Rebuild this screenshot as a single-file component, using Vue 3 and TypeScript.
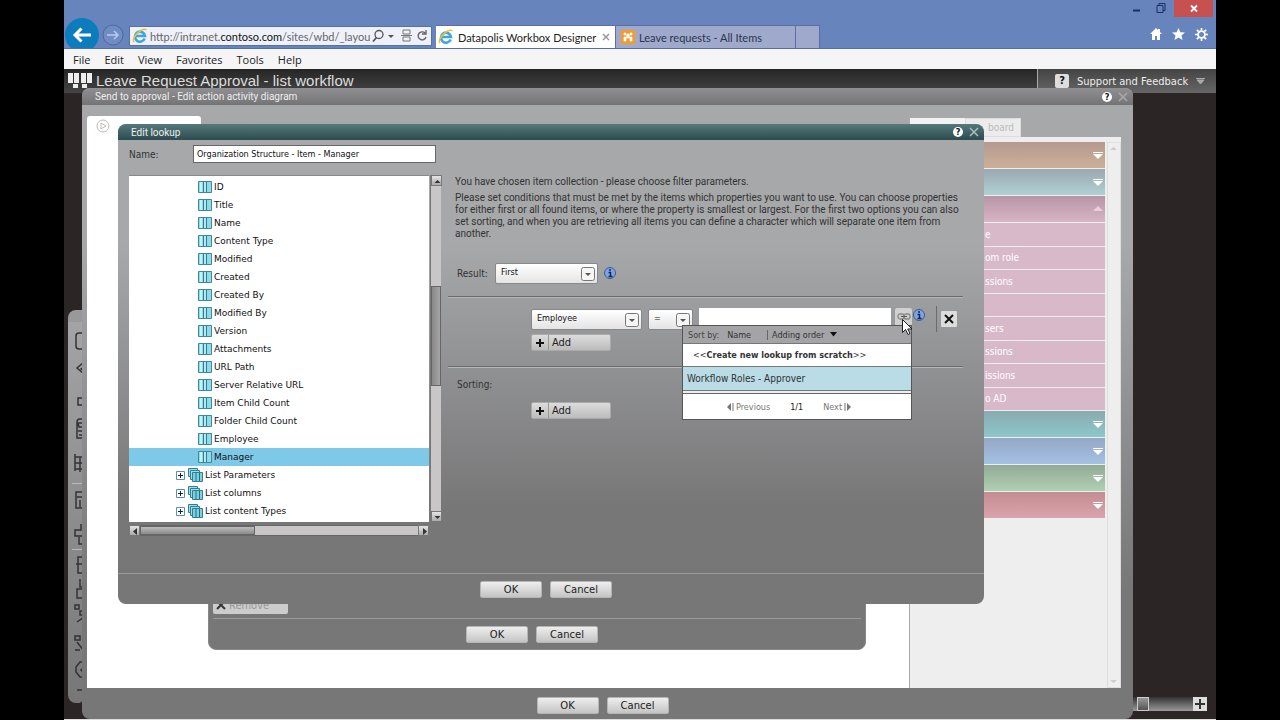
<script setup lang="ts">
import { ref } from 'vue'

interface Node { label: string; group?: boolean }
const columns: string[] = ['ID', 'Title', 'Name', 'Content Type', 'Modified', 'Created', 'Created By', 'Modified By', 'Version', 'Attachments', 'URL Path', 'Server Relative URL', 'Item Child Count', 'Folder Child Count', 'Employee', 'Manager']
const groups: string[] = ['List Parameters', 'List columns', 'List content Types']
const nodes: Node[] = [...columns.map((label) => ({ label })), ...groups.map((label) => ({ label, group: true }))]
const selected = ref('Manager')
const lookupName = ref('Organization Structure - Item - Manager')
const filterValue = ref('')
const address = 'http://intranet.'
const menus: string[] = ['File', 'Edit', 'View', 'Favorites', 'Tools', 'Help']
const pinkItems: string[] = ['e', 'om role', 'ssions', '', 'sers', 'ssions', 'issions', 'o AD']
</script>

<template>
  <div class="screen">
    <div class="desk">
      <header class="chrome">
        <div class="wincontrols">
          <button aria-label="Minimize"><svg width="24" height="17"><path d="M8 10.5h7" stroke="#1b2f66" stroke-width="2" /></svg></button>
          <button aria-label="Restore"><svg width="24" height="17"><path d="M8 5.500h6v7h-6zM10 5V3.500h6v7h-2" fill="none" stroke="#1b2f66" /></svg></button>
          <button class="close" aria-label="Close"><svg width="39" height="17"><path d="M17 5.500l6 6m0-6l-6 6" stroke="#fff" stroke-width="1.800" /></svg></button>
        </div>
        <div class="navrow">
          <button class="back" aria-label="Back"><svg width="34" height="34"><circle cx="17" cy="17" r="17" fill="#0c7cbc" /><path d="M26 17H10M16.500 10.500L10 17l6.500 6.500" fill="none" stroke="#fff" stroke-width="3" /></svg></button>
          <button class="forward" aria-label="Forward"><svg width="24" height="24"><circle cx="12" cy="12" r="10" fill="#708cc3" stroke="#4b68ab" /><path d="M6 12h11M13 8l4 4l-4 4" fill="none" stroke="#b9cbea" stroke-width="1.500" /></svg></button>
          <div class="address">
            <svg class="ie" width="16" height="16" viewBox="0 0 16 16"><path d="M12.700 10.500A5 5 0 1 1 13 8H4" fill="none" stroke="#40a5df" stroke-width="2.600" /><path d="M2 14C-1 10 10-1 14.500 2" fill="none" stroke="#e8c52d" stroke-width="1.500" /></svg>
            <span class="url">{{ address }}<b>contoso.com</b>/sites/wbd/_layou</span>
            <svg width="58" height="18"><circle cx="9" cy="7.500" r="4" fill="none" stroke="#555" stroke-width="1.300" /><path d="M6.500 10.500L3 14.500" stroke="#555" stroke-width="1.800" /><path d="M18 8h6l-3 3z" fill="#555" /><path d="M33 3h7v4h-7zM33 14v-4h7v4zM31 8.500h11" fill="none" stroke="#777" /><path d="M55 6A4 4 0 1 0 56 10M56 3v4h-4" fill="none" stroke="#666" stroke-width="1.400" /></svg>
          </div>
          <div class="tabs">
            <a class="tab active" href="#"><svg width="16" height="16" viewBox="0 0 16 16"><path d="M12.700 10.500A5 5 0 1 1 13 8H4" fill="none" stroke="#40a5df" stroke-width="2.600" /><path d="M2 14C-1 10 10-1 14.500 2" fill="none" stroke="#e8c52d" stroke-width="1.500" /></svg><span>Datapolis Workbox Designer</span><svg class="tabx" width="8" height="8"><path d="M1 1l6 6m0-6L1 7" stroke="#999" stroke-width="1.500" /></svg></a>
            <a class="tab" href="#"><svg width="14" height="14"><rect width="14" height="14" fill="#f59b2a" /><path d="M3 3h2v2H3zM9 3h2v2H9zM6 4h2v3H6zM3 7h8v1H3zM3 8h2v3H3zM9 8h2v3H9zM5 5l4 3M9 5L5 8" fill="#fff" stroke="#fff" stroke-width=".6" /></svg><span>Leave requests - All Items</span></a>
            <button class="newtab" aria-label="New tab"></button>
          </div>
          <div class="tools">
            <svg width="12" height="12"><path d="M6 0L0 6h2v6h3V8h2v4h3V6h2L10 4V1H8v1z" fill="#fff" /></svg>
            <svg width="13" height="12" viewBox="0 0 14 13"><path d="M7 0l2 4.600 5 .4-3.800 3.200 1.200 4.800L7 10.400 2.600 13l1.200-4.800L0 5l5-.4z" fill="#fff" /></svg>
            <svg width="13" height="13" viewBox="0 0 14 14"><circle cx="7" cy="7" r="3.700" fill="none" stroke="#fff" stroke-width="2" /><path d="M7 0v3M7 11v3M0 7h3M11 7h3M2 2l2 2M10 10l2 2M2 12l2-2M10 4l2-2" stroke="#fff" stroke-width="1.800" /></svg>
          </div>
        </div>
      </header>
      <nav class="menubar"><a v-for="m in menus" :key="m" href="#">{{ m }}</a></nav>

      <main class="workspace">
        <div class="appbar">
          <svg width="24" height="16"><path d="M0 0h5v10H0zM6 0h5v10H6zM13 0h5v10h-5zM19 0h5v10h-5zM5 11h5v4H5zM14 11h5v4h-5z" fill="#eee" /></svg>
          <h1>Leave Request Approval - list workflow</h1>
          <a class="support" href="#"><span class="qbox">?</span><span>Support and Feedback</span><svg width="9" height="6"><path d="M0 .5h9M1 2h7L4.500 6z" fill="#aaa" stroke="#aaa" /></svg></a>
        </div>

        <aside class="palette">
          <svg width="16" height="374" fill="none" stroke="#333" stroke-width="1.500">
            <path d="M16 3h-5q-3 0-3 3v10q0 3 3 3h5M16 32l-7 6l7 6M16 37l-3 2l3 2M16 67v8h-6v-7h6M15 64v11M16 89h-4q-3 0-3 3v16h7M10 93h6v4h-5zM10 101h6v4h-5M7 127h9M7 133h9M7 139h9M7 124v17M12 127v15M16 162H8v16h8M9 167h7M12 170v7M13 194v6H7v6h9M11 207v7h5M16 229v-2h-6v16h6M8 234h8M16 257h-4v-8M16 268h-7v-9h7M16 278v13M7 275h4v4H7zM12 281h4v4h-4zM16 287l-7 5M7 306h5v4H7zM9 312l7 9M7 320h5M16 332h-4l-4 5v5l4 5h4M16 337l-3 3l3 3M14 360h-5M16 371l-8 5" />
            <path d="M4 153.500h12M4 219.500h12" stroke="#bbb" stroke-width="1" />
          </svg>
        </aside>
        <div class="zoombar"><span class="track"><span class="knob"></span></span><button aria-label="Zoom in"><svg width="14" height="14"><path d="M7 2v10M2 7h10" stroke="#333" stroke-width="2" /></svg></button></div>

        <!-- activity diagram window -->
        <section class="win outer">
          <div class="wintitle"><h2>Send to approval - Edit action activity diagram</h2><button class="help" aria-label="Help">?</button><button class="x" aria-label="Close"><svg width="10" height="10"><path d="M1 1l8 8m0-8L1 9" stroke="#aaa" stroke-width="1.500" /></svg></button></div>
          <div class="outerbody">
            <div class="canvascol">
              <div class="canvastab"><svg width="14" height="14"><circle cx="7" cy="7" r="6" fill="none" stroke="#bbb" /><path d="M5 4l5 3l-5 3z" fill="none" stroke="#bbb" /></svg></div>
              <div class="canvas"></div>
            </div>
            <div class="sidecol">
              <div class="sidetabs"><span class="first"></span><span class="second">board</span></div>
              <div class="sidebox">
                <div class="accordion">
                  <div class="acc tan"><i class="down"></i></div>
                  <div class="acc sky"><i class="down"></i></div>
                  <div class="acc pink"><i class="up"></i></div>
                  <ul><li v-for="(p, i) in pinkItems" :key="i">{{ p }}</li></ul>
                  <div class="acc teal"><i class="down"></i></div>
                  <div class="acc blue"><i class="down"></i></div>
                  <div class="acc green"><i class="down"></i></div>
                  <div class="acc red"><i class="down"></i></div>
                </div>
                <div class="fadebar"><svg width="11" height="11"><path d="M2 7h7L5.500 4z" fill="#ccc" /></svg><svg width="11" height="11"><path d="M2 4h7L5.500 7z" fill="#ccc" /></svg></div>
              </div>
            </div>
          </div>
          <div class="actions"><button class="btn">OK</button><button class="btn">Cancel</button></div>
        </section>

        <!-- window behind the lookup editor -->
        <section class="win middle">
          <div class="removeline"><button class="remove"><svg width="16" height="12"><path d="M4 2l8 8m0-8l-8 8" stroke="#333" stroke-width="2" /></svg><span>Remove</span></button></div>
          <div class="actions"><button class="btn">OK</button><button class="btn">Cancel</button></div>
        </section>

        <section class="win lookup">
          <div class="wintitle"><h2>Edit lookup</h2><button class="help" aria-label="Help">?</button><button class="x" aria-label="Close"><svg width="10" height="10"><path d="M1 1l8 8m0-8L1 9" stroke="#a9bfc0" stroke-width="1.500" /></svg></button></div>
          <div class="lookupbody">
            <div class="left">
              <div class="namerow"><label for="lname">Name:</label><input id="lname" v-model="lookupName" type="text" /></div>
              <div class="treewrap">
                <ul class="tree">
                  <li v-for="n in nodes" :key="n.label" :class="{ sel: n.label === selected, group: n.group }" @click="selected = n.label">
                    <svg v-if="!n.group" width="14" height="12"><path d="M.5.500h13v11H.5z" fill="#8fdbe8" stroke="#3d8a99" /><path d="M2 1h2v10H2z" fill="#c5f2f7" /><path d="M5.500 1v10M8.500 1v10" stroke="#2f7f92" /><path d="M6 1h2v10H6z" fill="#b5e8f2" /></svg>
                    <template v-else>
                      <svg width="9" height="9"><path d="M.5.500h8v8h-8z" fill="#fff" stroke="#5a8fae" /><path d="M2 4.500h5M4.500 2v5" stroke="#123" /></svg>
                      <svg class="stack" width="15" height="14"><path d="M.5.500h9v8h-9z" fill="#9fdce8" stroke="#2f8093" /><path d="M2.500 2.500h9v9h-9z" fill="#9fdce8" stroke="#2f8093" /><path d="M4.500 4.500h10v9h-10z" fill="#7fd0df" stroke="#2f8093" /><path d="M8 5v8M11.500 5v8" stroke="#226d80" /></svg>
                    </template>
                    <span>{{ n.label }}</span>
                  </li>
                </ul>
                <div class="vbar"><svg class="cap" width="11" height="11"><path d="M2.500 7h6L5.500 4z" fill="#333" /></svg><span class="vthumb"></span><svg class="cap" width="11" height="11"><path d="M2.500 4h6L5.500 7z" fill="#333" /></svg></div>
                <div class="hbar"><svg class="cap" width="11" height="11"><path d="M7 2v7L3 5.500z" fill="#333" /></svg><span class="hthumb"></span><svg class="cap" width="11" height="11"><path d="M4 2v7l4-3.500z" fill="#333" /></svg></div>
              </div>
            </div>
            <div class="right">
              <div class="intro">
                <p>You have chosen item collection - please choose filter parameters.</p>
                <p>Please set conditions that must be met by the items which properties you want to use. You can choose properties<br />for either first or all found items, or where the property is smallest or largest. For the first two options you can also<br />set sorting, and when you are retrieving all items you can define a character which will separate one item from<br />another.</p>
              </div>
              <div class="resultrow">
                <label for="result">Result:</label>
                <span class="sel-box wide"><select id="result"><option>First</option></select><svg width="14" height="14"><rect x=".5" y=".5" width="13" height="13" rx="2" fill="#f5f5f5" stroke="#777" /><path d="M4 6h6l-3 3z" fill="#555" /></svg></span>
                <svg class="info" width="12" height="12"><circle cx="6" cy="6" r="5.500" fill="#7fa5dd" stroke="#3d5c94" /><path d="M6 2v2M4.500 5.500H6.500V9.500M4.500 9.500h4" fill="none" stroke="#10275c" stroke-width="1.500" /></svg>
              </div>
              <hr />
              <div class="filterrow">
                <span class="sel-box field"><select aria-label="Field"><option>Employee</option></select><svg width="14" height="14"><rect x=".5" y=".5" width="13" height="13" rx="2" fill="#f5f5f5" stroke="#777" /><path d="M4 6h6l-3 3z" fill="#555" /></svg></span>
                <span class="sel-box oper"><select aria-label="Operator"><option>=</option></select><svg width="14" height="14"><rect x=".5" y=".5" width="13" height="13" rx="2" fill="#f5f5f5" stroke="#777" /><path d="M4 6h6l-3 3z" fill="#555" /></svg></span>
                <div class="valuebox">
                  <input v-model="filterValue" type="text" aria-label="Value" />
                  <button class="link" aria-label="Lookup"><svg width="14" height="10"><rect x="1" y="2" width="6" height="5" rx="2" fill="none" stroke="#888" stroke-width="1.300" /><rect x="7" y="2" width="6" height="5" rx="2" fill="none" stroke="#888" stroke-width="1.300" /><path d="M4 4.500h6" stroke="#555" /></svg></button>
                  <div class="popup">
                    <div class="sort"><span class="by">Sort by:</span><button>Name</button><button class="order">Adding order <svg width="7" height="5"><path d="M0 0h7L3.500 4.500z" fill="#111" /></svg></button></div>
                    <button class="create">&lt;&lt;<b>Create new lookup from scratch</b>&gt;&gt;</button>
                    <button class="choice">Workflow Roles - Approver</button>
                    <div class="pager"><button><svg width="7" height="8"><path d="M4 0v8L0 4z" fill="#777" /><path d="M6 0v8" stroke="#777" /></svg> Previous</button><span>1/1</span><button>Next <svg width="7" height="8"><path d="M3 0v8l4-4z" fill="#777" /><path d="M1 0v8" stroke="#777" /></svg></button></div>
                  </div>
                  <svg class="pointer" width="11" height="17"><path d="M.5.500v13l3-3 2.500 5 2-1-2.300-4.500H10z" fill="#fff" stroke="#222" /></svg>
                </div>
                <svg class="info" width="12" height="12"><circle cx="6" cy="6" r="5.500" fill="#7fa5dd" stroke="#3d5c94" /><path d="M6 2v2M4.500 5.500H6.500V9.500M4.500 9.500h4" fill="none" stroke="#10275c" stroke-width="1.500" /></svg>
                <span class="vline"></span>
                <button class="del" aria-label="Delete"><svg width="10" height="10"><path d="M1 1l8 8m0-8L1 9" stroke="#111" stroke-width="2" /></svg></button>
              </div>
              <div class="addrow"><button class="add"><span class="plus"><svg width="8" height="8"><path d="M4 0v8M0 4h8" stroke="#111" stroke-width="2" /></svg></span>Add</button></div>
              <hr />
              <p class="sorting">Sorting:</p>
              <div class="addrow"><button class="add"><span class="plus"><svg width="8" height="8"><path d="M4 0v8M0 4h8" stroke="#111" stroke-width="2" /></svg></span>Add</button></div>
            </div>
          </div>
          <div class="actions"><button class="btn">OK</button><button class="btn">Cancel</button></div>
        </section>
      </main>
    </div>
  </div>
</template>

<style>
body { margin: 0; background: #000; }
</style>

<style scoped>
* { box-sizing: border-box; }
h1, h2, p, ul { margin: 0; padding: 0; font-weight: normal; }
ul { list-style: none; }
button { border: 0; padding: 0; background: none; font: inherit; color: inherit; display: flex; align-items: center; }
a { color: inherit; text-decoration: none; }
svg { display: block; flex: none; }
.screen { background: #000; padding: 0 5%; font-family: "DejaVu Sans Condensed", "DejaVu Sans", sans-serif; font-size: 10px; color: #222; }
.desk { height: 100vh; min-height: 720px; display: flex; flex-direction: column; overflow: hidden; border-bottom: 1px solid #ddd; }
.chrome { height: 49px; background: #6785bc; border-bottom: 1px solid #55709f; overflow: hidden; flex: none; font-family: Lato, "Noto Sans", sans-serif; }
.wincontrols { display: flex; justify-content: flex-end; padding-right: 3px; height: 17px; }
.close { background: #c75050; margin-left: 1px; }
.navrow { display: flex; height: 31px; }
.back { align-self: flex-start; margin: 1px 2px 0 1px; height: 34px; }
.forward { height: 24px; margin: 6px 4px 0 0; }
.address { flex: none; width: 303px; height: 20px; margin-top: 9px; background: #eef1fa; border: 1px solid #5670a8; display: flex; align-items: center; padding: 0 3px 0 2px; font-size: 11px; color: #666; }
.url { flex: 1; min-width: 0; white-space: nowrap; margin-left: 2px; }
.url b { font-weight: 400; color: #111; }
.tabs { display: flex; margin: 8px 0 0 4px; height: 23px; font-size: 11px; }
.tab { width: 180px; background: #9ea9cc; border: 1px solid #5a70a4; border-left: 0; border-bottom: 0; display: flex; align-items: center; gap: 4px; padding-left: 5px; color: #2c3450; white-space: nowrap; }
.tab.active { background: #fff; color: #222; padding-left: 2px; }
.tabx { margin: 0 5px 0 auto; }
.newtab { width: 24px; background: #9ea9cc; border: 1px solid #5a70a4; border-left: 0; border-bottom: 0; }
.tools { margin: 11px 8px 0 auto; display: flex; gap: 10px; }
.menubar { flex: none; height: 20px; background: #f5f5f6; display: flex; align-items: center; padding-left: 9px; gap: 14px; font: 11px "Open Sans", "Noto Sans", sans-serif; color: #222; }
.workspace { flex: 1; position: relative; background: #2b2526; min-height: 0; }
.appbar { height: 24px; background: linear-gradient(#262626, #444); display: flex; align-items: center; padding-left: 4px; gap: 4px; color: #ddd; }
.appbar h1 { font: 15px "Liberation Sans", Arial, sans-serif; padding-bottom: 2px; }
.support { margin-left: auto; width: 179px; height: 24px; background: linear-gradient(#444, #666); border-left: 1px solid #aaa; display: flex; align-items: center; gap: 8px; padding-left: 17px; font-size: 11px; color: #eee; white-space: nowrap; }
.qbox { width: 14px; height: 14px; border-radius: 2px; background: #ddd; color: #111; font-weight: bold; line-height: 14px; text-align: center; }
.palette { position: absolute; left: 4px; top: 241px; bottom: 16px; width: 30px; border-radius: 8px; background: linear-gradient(#999 12px, #a4a4a6 12px, #777); padding: 20px 0 0; overflow: hidden; }
.zoombar { position: absolute; right: 9px; bottom: 8px; width: 76px; height: 14px; display: flex; }
.zoombar .track { flex: 1; background: linear-gradient(#333, #999); padding-left: 6px; }
.knob { display: block; width: 12px; height: 14px; background: linear-gradient(#999, #555); border: 1px solid #ccc; }
.zoombar button { background: #ddd; }
.win { position: absolute; display: flex; flex-direction: column; border-radius: 8px; background: linear-gradient(#a7a8aa 25%, #777778 80%); }
.wintitle { flex: none; height: 17px; display: flex; align-items: center; padding: 0 5px 0 13px; border-radius: 8px 8px 0 0; color: #eee; background: linear-gradient(#909092, #747476); }
.wintitle h2 { flex: 1; font: 10px Roboto, "Noto Sans", sans-serif; }
.help { width: 10px; height: 10px; border-radius: 5px; background: #fff; color: #111; font-size: 9px; font-weight: bold; justify-content: center; line-height: 10px; margin-right: 6px; }
.outer { left: 18px; right: 83px; top: 19px; bottom: 0; }
.outerbody { flex: 1; display: flex; padding: 11px 12px 0 5px; min-height: 0; }
.outer .actions { height: 31px; padding-top: 3px; }
.canvascol { flex: 1; display: flex; flex-direction: column; border-right: 1px solid #aaa; }
.canvastab { width: 114px; height: 20px; padding: 3px 9px; background: #fff; border-radius: 3px 3px 0 0; }
.canvas { flex: 1; background: #fff; }
.sidecol { width: 211px; display: flex; flex-direction: column; }
.sidetabs { display: flex; height: 21px; padding-top: 2px; color: #bbb; }
.first { width: 55px; background: #f2f2f2; }
.second { width: 56px; background: #ececec; border: 1px solid #ddd; padding: 3px 0 0 22px; }
.sidebox { flex: 1; background: #eee; display: flex; gap: 2px; padding-top: 5px; }
.accordion { flex: 1; color: #fff; }
.acc { height: 26px; margin-bottom: 1px; padding: 10px 2px; display: flex; justify-content: flex-end; }
.down { border-top: 1px solid #fff; width: 10px; height: 7px; }
.down::after { content: ""; display: block; margin-top: 1px; border: 5px solid transparent; border-top-color: #fff; border-bottom: 0; }
.up { border: 5px solid transparent; border-bottom-color: #e8cfdd; border-top: 0; height: 5px; }
.tan { background: linear-gradient(#b49a90, #cdaf98); }
.sky { background: linear-gradient(#9ba8b0, #b0d0d3); }
.pink { background: linear-gradient(#b795a6, #d6b5c5); }
.accordion ul { display: grid; grid-template-rows: repeat(8, 1fr); height: 188px; }
.accordion li { margin-bottom: 1px; background: #d8b9ca; padding-left: 75px; display: flex; align-items: center; }
.teal { background: linear-gradient(#8aaab0, #8dc8ca); }
.blue { background: linear-gradient(#94a8c4, #a4c1e4); }
.green { background: linear-gradient(#92aa94, #afd0b3); }
.red { background: linear-gradient(#c38d92, #dba3ac); }
.fadebar { width: 14px; border: 1px solid #ddd; display: flex; flex-direction: column; justify-content: space-between; }
.actions { flex: none; display: flex; justify-content: center; gap: 8px; align-items: center; height: 30px; padding-right: 10px; }
.btn { width: 62px; height: 17px; justify-content: center; border-radius: 2px; border: 1px solid #b5b5b5; background: linear-gradient(#eee, #c4c4c4); color: #222; font: 10px "DejaVu Sans", sans-serif; }
.middle { left: 144px; right: 350px; top: 400px; bottom: 69px; justify-content: flex-end; border: 1px solid #888; background: #777778; }
.removeline { border-bottom: 1px solid #999; height: 23px; margin: 0 4px; }
.remove { width: 75px; height: 18px; background: #ccc; border-radius: 2px; color: #999; font-size: 11px; }
.lookup { left: 54px; right: 232px; top: 55px; bottom: 115px; }
.lookup .wintitle { height: 16px; background: linear-gradient(#55797c, #2c4b4f); }
.lookupbody { flex: 1; min-height: 0; display: flex; padding: 5px 21px 0 11px; border-bottom: 1px solid #999; margin: 0; }
.left { width: 312px; flex: none; }
.namerow { display: flex; align-items: center; height: 18px; }
.namerow label { width: 64px; color: #333; }
.namerow input { width: 243px; height: 18px; border: 1px solid #666; background: #fff; padding: 0 3px; font: inherit; font-size: 9px; color: #111; }
.treewrap { display: grid; grid-template-columns: 300px 12px; grid-template-rows: 347px 12px; row-gap: 3px; margin-top: 12px; }
.tree { background: #fff; padding-top: 2px; font: 9px "DejaVu Sans", sans-serif; color: #111; border-top: 1px solid #888; }
.tree li { height: 18px; display: flex; align-items: center; padding-left: 69px; gap: 2px; }
.tree li.sel { background: #7fc9e8; }
.tree li.group { padding-left: 47px; }
.stack { margin-left: 1px; }
.vbar { margin-left: 1px; background: #c8c6c7; border: 1px solid #777; border-width: 0 0 0 1px; display: flex; flex-direction: column; }
.cap { background: linear-gradient(#e5e5e5, #aaa); border: 1px solid #777; }
.vthumb { height: 100px; margin: 100px 0 auto; background: linear-gradient(90deg, #888, #a5a5a5); border: 1px solid #666; }
.hbar { background: #c8c6c7; display: flex; height: 11px; border: 1px solid #666; border-width: 1px 0; align-items: center; }
.hbar .cap:last-child { margin-left: auto; }
.hthumb { width: 115px; height: 9px; background: linear-gradient(#bbb, #8b8b8b); border: 1px solid #666; }
.right { flex: 1; min-width: 0; padding: 31px 0 0 7px; color: #333; }
.intro { padding-left: 7px; line-height: 12px; white-space: nowrap; font-family: Roboto, "Noto Sans", sans-serif; }
.intro p + p { margin-top: 4px; }
.resultrow { display: flex; align-items: center; margin-top: 22px; height: 22px; padding-left: 9px; }
.resultrow label { width: 38px; }
.sel-box { flex: none; position: relative; display: block; height: 21px; border-radius: 2px; border: 1px solid #888; background: linear-gradient(#fff, #e4e4e4); }
.sel-box select { appearance: none; width: 100%; height: 16px; border: 0; background: none; padding: 0 5px; font: inherit; font-size: 9px; color: #111; display: block; }
.sel-box svg { position: absolute; right: 2px; bottom: 2px; pointer-events: none; }
.wide { width: 103px; }
.field { width: 111px; }
.oper { width: 45px; }
.info { margin-left: 6px; }
hr { border: 0; border-top: 1px solid #6c6c6e; border-bottom: 1px solid #b5b5b7; margin: 12px 0 10px; }
.filterrow { display: flex; height: 22px; padding-left: 83px; gap: 6px; align-items: center; }
.filterrow .info { margin: 0 0 8px -5px; }
.valuebox { flex: none; position: relative; display: flex; gap: 4px; width: 213px; align-self: flex-start; }
.valuebox input { flex: 1; min-width: 0; height: 20px; border: 0; background: #fff; padding: 0 3px; }
.link { width: 17px; height: 18px; background: #d0d0d0; border-radius: 2px; justify-content: center; }
.popup { position: absolute; right: 0; top: 17px; width: 230px; background: #eee; border: 1px solid #555; font-size: 9px; }
.sort { height: 17px; display: flex; align-items: center; padding-left: 5px; background: #a4a4a6; gap: 8px; white-space: nowrap; }
.by { color: #444; }
.order { border-left: 1px solid #666; padding-left: 4px; gap: 6px; margin-left: 8px; }
.create, .choice { width: 100%; height: 23px; background: #fff; border-top: 1px solid #777; padding-left: 10px; color: #333; white-space: nowrap; }
.choice { height: 25px; background: #b9dce6; padding-left: 4px; font-size: 10px; border-bottom: 1px solid #777; }
.pager { margin-top: 2px; height: 26px; background: #fff; border-top: 1px solid #666; display: flex; align-items: center; padding-left: 44px; gap: 20px; color: #777; }
.pager button { gap: 2px; }
.pager span { color: #222; }
.pointer { position: absolute; left: 203px; top: 11px; }
.vline { width: 1px; height: 26px; background: #6c6c6e; margin-left: 5px; }
.del { width: 18px; height: 18px; background: #ddd; border: 1px solid #999; border-radius: 2px; justify-content: center; margin-left: -3px; }
.addrow { padding: 4px 0 3px 83px; }
.add { width: 80px; height: 17px; background: linear-gradient(#dcdcdc, #bcbcbc); border: 1px solid #aaa; border-radius: 2px; font-size: 11px; color: #222; gap: 3px; }
.plus { width: 17px; height: 15px; display: flex; align-items: center; justify-content: center; border-right: 1px solid #999; }
.sorting { padding: 1px 0 8px 9px; }
</style>
